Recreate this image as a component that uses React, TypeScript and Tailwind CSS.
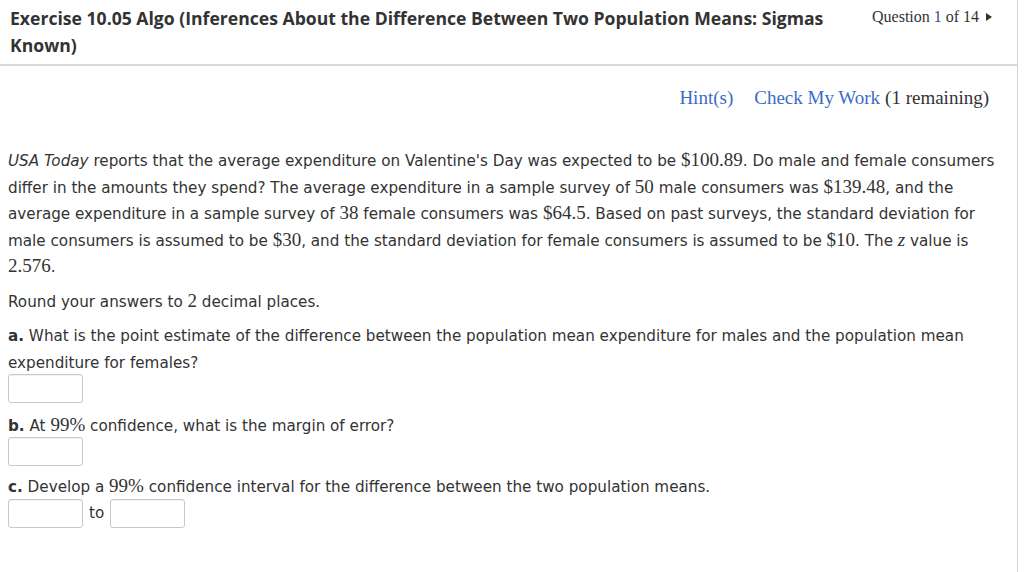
import React from "react";

const M = ({ children }: { children: React.ReactNode }) => (
  <span className="text-[19px] leading-[0]" style={{ fontFamily: '"Liberation Serif", serif' }}>{children}</span>
);

const Box = () => (
  <div className="w-[75px] h-[29px] rounded-[3px] border border-[#c8c8c8] bg-white shadow-[inset_0_1px_1px_rgba(0,0,0,0.06)]" />
);

export default function App() {
  return (
    <div className="w-[1024px] h-[572px] bg-white overflow-hidden">
      <div className="w-[1018px] h-[572px] border-r border-[#d4d4d4] text-[#333]">
        <div className="flex border-b-2 border-[#d9d9d9] h-[66px]">
          <div
            className="w-[850px] pl-[10px] pt-[5px] text-[17.6px] font-bold leading-[27px] text-[#333]"
            style={{ fontFamily: '"Open Sans", sans-serif' }}
          >
            Exercise 10.05 Algo (Inferences About the Difference Between Two Population Means: Sigmas Known)
          </div>
          <div
            className="pl-[22px] pt-[3px] text-[16px] leading-[22px] text-[#333] flex items-center h-[30px]"
            style={{ fontFamily: '"Liberation Serif", serif' }}
          >
            Question <span className="mx-[4px] text-[#3d4a7a]">1</span> of 14
            <svg width="8" height="10" viewBox="0 0 8 10" className="ml-[6px]">
              <path d="M1 1 L7 5 L1 9 Z" fill="#333" />
            </svg>
          </div>
        </div>
        <div
          className="flex justify-end pr-[28px] pt-[21px] text-[19px] leading-[22px]"
          style={{ fontFamily: '"Liberation Serif", serif' }}
        >
          <span className="text-[#3a6cc6] mr-[21px]">Hint(s)</span>
          <span className="text-[#3a6cc6]">Check My Work</span>
          <span className="ml-[5px] text-[#333]">(1 remaining)</span>
        </div>
        <div
          className="pl-[8px] pr-[20px] pt-[39px] text-[15.2px] leading-[26.5px] text-[#333]"
          style={{ fontFamily: '"DejaVu Sans", Verdana, sans-serif' }}
        >
          <p>
            <i>USA Today</i> reports that the average expenditure on Valentine's Day was expected to be <M>$100.89</M>. Do male and female consumers differ in the amounts they spend? The average expenditure in a sample survey of <M>50</M> male consumers was <M>$139.48</M>, and the average expenditure in a sample survey of <M>38</M> female consumers was <M>$64.5</M>. Based on past surveys, the standard deviation for male consumers is assumed to be <M>$30</M>, and the standard deviation for female consumers is assumed to be <M>$10</M>. The <M><i>z</i></M> value is <M>2.576</M>.
          </p>
          <p className="mt-[8.5px]">
            Round your answers to <M>2</M> decimal places.
          </p>
          <p className="mt-[7.5px]">
            <b>a.</b> What is the point estimate of the difference between the population mean expenditure for males and the population mean expenditure for females?
          </p>
          <div className="-mt-[2px]"><Box /></div>
          <p className="mt-[9.5px]">
            <b>b.</b> At <M>99%</M> confidence, what is the margin of error?
          </p>
          <div className="-mt-[2px]"><Box /></div>
          <p className="mt-[7.5px]">
            <b>c.</b> Develop a <M>99%</M> confidence interval for the difference between the two population means.
          </p>
          <div className="-mt-[1px] flex items-center gap-[6px]">
            <Box />
            <span>to</span>
            <Box />
          </div>
        </div>
      </div>
    </div>
  );
}
